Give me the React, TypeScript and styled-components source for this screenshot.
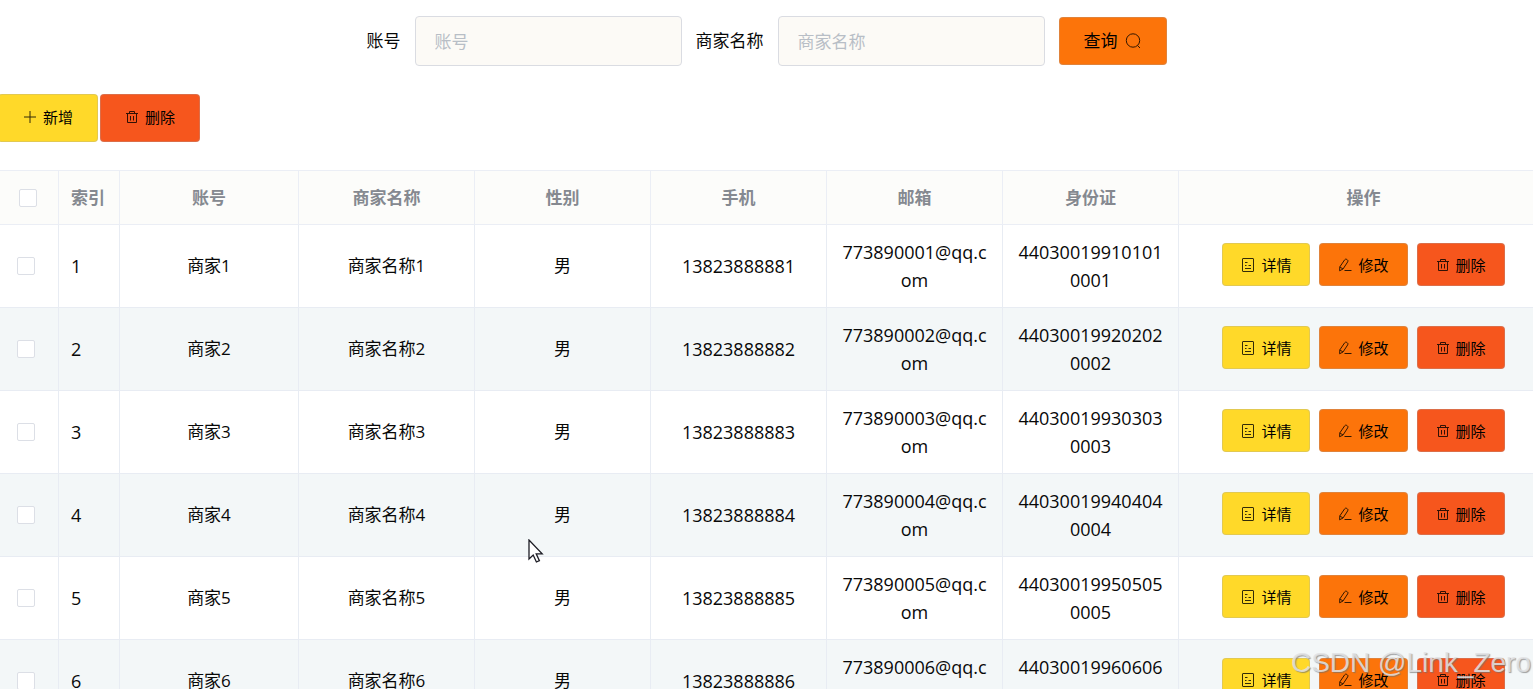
import React from 'react';
import styled, { createGlobalStyle, css } from 'styled-components';

const GlobalStyle = createGlobalStyle`
  *, *::before, *::after { box-sizing: border-box; }
  body {
    margin: 0;
    background: #fff;
    color: #080808;
    font-family: "Open Sans", "Noto Sans CJK SC", sans-serif;
    font-size: 17px;
    line-height: 28px;
  }
  button, input { font-family: inherit; }
`;

type Tone = 'yellow' | 'orange' | 'red';

const tones: Record<Tone, string> = {
  yellow: '#ffd929',
  orange: '#fc740a',
  red: '#f6561d',
};

const Page = styled.main`
  position: relative;
  height: 100vh;
  overflow: hidden;
  padding-top: 16px;
  display: flex;
  flex-direction: column;
  gap: 28px;
`;

const SearchForm = styled.form`
  display: flex;
  justify-content: center;
  align-items: center;
  gap: 14px;
`;

const Field = styled.div`
  display: flex;
  align-items: center;
  gap: 14px;
`;

const TextInput = styled.input`
  width: 267px;
  height: 50px;
  padding: 0 19px;
  border: 1px solid #dadce2;
  border-radius: 4px;
  background: #fcfaf6;
  color: #080808;
  font-size: 17px;
  outline: none;

  &::placeholder {
    color: #b8bec6;
    opacity: 1;
  }
`;

const sizes = {
  search: css`
    height: 48px;
    padding: 0 24px;
    font-size: 17px;
  `,
  tool: css`
    height: 48px;
    padding: 0 24px 2px;
    font-size: 15px;
  `,
  row: css`
    height: 43px;
    padding: 0 18px;
    font-size: 15px;
  `,
};

const Button = styled.button<{ $tone: Tone; $size: keyof typeof sizes }>`
  display: inline-flex;
  align-items: center;
  justify-content: center;
  gap: 6px;
  flex: none;
  border: 1px solid rgba(160, 165, 175, 0.3);
  border-radius: 4px;
  background: ${({ $tone }) => tones[$tone]};
  color: #000;
  line-height: 20px;
  white-space: nowrap;
  cursor: pointer;
  ${({ $size }) => sizes[$size]}
`;

const Toolbar = styled.div`
  display: flex;
  gap: 2px;
  margin-left: -2px;
`;

const TableWrap = styled.div`
  margin-right: -16px;
`;

const Table = styled.table`
  width: 100%;
  table-layout: fixed;
  border-collapse: separate;
  border-spacing: 0;
  border-top: 1px solid #ebeef5;
`;

const Col = styled.col<{ $width?: number }>`
  width: ${({ $width }) => ($width ? `${$width}px` : 'auto')};
`;

const HeadCell = styled.th<{ $align?: string }>`
  height: 54px;
  padding: 0 12px;
  border-right: 1px solid #ebeef5;
  border-bottom: 1px solid #ebeef5;
  background: #fcfcfa;
  color: #858990;
  font-weight: 700;
  text-align: ${({ $align }) => $align ?? 'center'};
`;

const Row = styled.tr`
  background: #fff;
  &:nth-child(even) { background: #f3f7f8; }
`;

const Cell = styled.td<{ $align?: string; $numeric?: boolean }>`
  height: 83px;
  padding: 0 12px;
  border-right: 1px solid #e8ecf3;
  border-bottom: 1px solid #e8ecf3;
  font-size: ${({ $numeric }) => ($numeric ? 18 : 17)}px;
  text-align: ${({ $align }) => $align ?? 'center'};
  word-break: break-all;
`;

const CheckHead = styled(HeadCell)`
  padding: 0 19px;
`;

const CheckCell = styled(Cell)`
  padding: 0 17px;
`;

const ActionCell = styled(Cell)`
  padding: 0 12px 3px;
`;

const Checkbox = styled.input`
  appearance: none;
  display: block;
  width: 18px;
  height: 18px;
  margin: 0;
  border: 1px solid #dcdfe6;
  border-radius: 2px;
  background: #fff;

  &:checked { background: #fc740a; }
`;

const Actions = styled.div`
  display: flex;
  justify-content: center;
  gap: 9px;
`;

const Glyph = styled.svg`
  flex: none;
  fill: none;
  stroke: currentColor;
  stroke-width: 1;
  opacity: 0.8;
`;

const Watermark = styled.div`
  position: absolute;
  right: 2px;
  bottom: 10px;
  font: 28px/32px "Liberation Sans", sans-serif;
  color: rgba(226, 227, 229, 0.85);
  text-shadow: 1px 1px 1px rgba(110, 110, 110, 0.65);
  pointer-events: none;
`;

const Pointer = styled.svg`
  position: absolute;
  left: 528px;
  top: 539px;
  pointer-events: none;
`;

const PlusIcon = () => (
  <Glyph width="14" height="14" viewBox="0 0 14 14" aria-hidden>
    <path d="M7 1v12M1 7h12" />
  </Glyph>
);

const TrashIcon = () => (
  <Glyph width="14" height="14" viewBox="0 0 14 14" aria-hidden>
    <path d="M1 3.5h12M4.5 3.5v-2h5v2M2.5 3.5v9h9v-9M5.5 6v4.5M8.5 6v4.5" />
  </Glyph>
);

const DetailIcon = () => (
  <Glyph width="14" height="14" viewBox="0 0 14 14" aria-hidden>
    <path d="M1.5 1q0-.5.5-.5h10q.5 0 .5.5v12q0 .5-.5.5h-10q-.5 0-.5-.5zM4 4.5h2.5M7.5 7.5h2.5M4 7.5h1.5M4 10.5h6" />
  </Glyph>
);

const EditIcon = () => (
  <Glyph width="14" height="14" viewBox="0 0 14 14" aria-hidden>
    <path d="M6.6 1.9q.9-1.3 2.2-.5l.5.4q1.2.8.4 2.1L5 11l-3.4 1.8.2-3.9zM1.8 8.9L5 11M6.5 12.5h7" />
  </Glyph>
);

const SearchIcon = () => (
  <Glyph width="18" height="18" viewBox="0 0 18 18" aria-hidden>
    <circle cx="9" cy="8.5" r="6.7" />
    <path d="M13.5 13.5l2.5 2.5" />
  </Glyph>
);

const merchants = [
  { id: 1, card: '440300199101010001' },
  { id: 2, card: '440300199202020002' },
  { id: 3, card: '440300199303030003' },
  { id: 4, card: '440300199404040004' },
  { id: 5, card: '440300199505050005' },
  { id: 6, card: '440300199606060006' },
].map((m) => ({
  ...m,
  account: `商家${m.id}`,
  name: `商家名称${m.id}`,
  gender: '男',
  phone: `1382388888${m.id}`,
  email: `77389000${m.id}@qq.com`,
}));

const headings = ['账号', '商家名称', '性别', '手机', '邮箱', '身份证', '操作'];

export default function App() {
  return (
    <Page>
      <GlobalStyle />
      <SearchForm onSubmit={(e) => e.preventDefault()}>
        <Field>
          <label htmlFor="account">账号</label>
          <TextInput id="account" placeholder="账号" />
        </Field>
        <Field>
          <label htmlFor="merchant">商家名称</label>
          <TextInput id="merchant" placeholder="商家名称" />
        </Field>
        <Button type="submit" $tone="orange" $size="search">
          查询
          <SearchIcon />
        </Button>
      </SearchForm>

      <Toolbar>
        <Button type="button" $tone="yellow" $size="tool"><PlusIcon />新增</Button>
        <Button type="button" $tone="red" $size="tool"><TrashIcon />删除</Button>
      </Toolbar>

      <TableWrap>
        <Table>
          <colgroup>
            <Col $width={59} />
            <Col $width={61} />
            <Col $width={179} />
            <Col />
            <Col />
            <Col />
            <Col />
            <Col />
            <Col $width={370} />
          </colgroup>
          <thead>
            <tr>
              <CheckHead><Checkbox type="checkbox" aria-label="全选" /></CheckHead>
              <HeadCell $align="left">索引</HeadCell>
              {headings.map((h) => <HeadCell key={h}>{h}</HeadCell>)}
            </tr>
          </thead>
          <tbody>
            {merchants.map((m) => (
              <Row key={m.id}>
                <CheckCell><Checkbox type="checkbox" aria-label={m.account} /></CheckCell>
                <Cell $align="left" $numeric>{m.id}</Cell>
                <Cell>{m.account}</Cell>
                <Cell>{m.name}</Cell>
                <Cell>{m.gender}</Cell>
                <Cell $numeric>{m.phone}</Cell>
                <Cell $numeric>{m.email}</Cell>
                <Cell $numeric>{m.card}</Cell>
                <ActionCell>
                  <Actions>
                    <Button type="button" $tone="yellow" $size="row"><DetailIcon />详情</Button>
                    <Button type="button" $tone="orange" $size="row"><EditIcon />修改</Button>
                    <Button type="button" $tone="red" $size="row"><TrashIcon />删除</Button>
                  </Actions>
                </ActionCell>
              </Row>
            ))}
          </tbody>
        </Table>
      </TableWrap>

      <Pointer width="16" height="25" viewBox="0 0 16 25" aria-hidden>
        <path
          d="M1 1v19l4.2-4 3.2 7 3-1.3-3.2-6.9h6z"
          fill="#fff"
          stroke="#1c1c24"
          strokeWidth="1.3"
        />
      </Pointer>
      <Watermark>CSDN @Link_Zero</Watermark>
    </Page>
  );
}
